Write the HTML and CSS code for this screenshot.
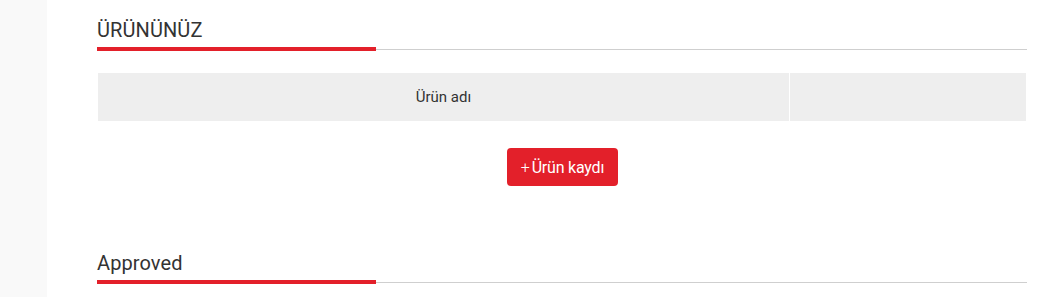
FILE: index.html
```html
<!DOCTYPE html>
<html lang="tr">
<head>
<meta charset="utf-8">
<link rel="stylesheet" href="styles.css">
</head>
<body>
<div class="layout">
  <aside class="sidebar"></aside>
  <main class="content">
    <section class="section">
      <h2 class="section-title">ÜRÜNÜNÜZ</h2>
      <div class="title-rule"><span class="title-accent"></span></div>
      <div class="table">
        <div class="cell cell-main">Ürün adı</div>
        <div class="cell cell-side"></div>
      </div>
      <div class="actions">
        <button class="btn-add"><span class="plus">+</span>Ürün kaydı</button>
      </div>
    </section>
    <section class="section section-approved">
      <h2 class="section-title">Approved</h2>
      <div class="title-rule"><span class="title-accent"></span></div>
    </section>
  </main>
</div>
</body>
</html>
```
FILE: styles.css
```css
html, body {
  margin: 0;
  padding: 0;
  background: #ffffff;
  font-family: Roboto, "Liberation Sans", sans-serif;
  color: #333333;
}
.layout {
  display: flex;
  height: 297px;
  overflow: hidden;
}
.sidebar {
  width: 47px;
  flex: none;
  background: #f9f9f9;
}
.content {
  flex: 1;
  padding: 0 33px 0 50px;
}
.section {
  padding-top: 17px;
}
.section-title {
  margin: 0;
  font-size: 20px;
  font-weight: 400;
  line-height: 27px;
  color: #333333;
  letter-spacing: 0.1px;
}
.title-rule {
  margin-top: 3px;
  height: 4px;
  display: flex;
  align-items: center;
  background: linear-gradient(#cfcfcf, #cfcfcf) 0 50% / 100% 1px no-repeat;
}
.title-accent {
  display: block;
  width: 279px;
  height: 4px;
  background: #e3202a;
}
.table {
  margin: 22px 1px 0 1px;
  display: grid;
  grid-template-columns: 691px 1fr;
  column-gap: 1px;
  height: 48px;
}
.cell {
  background: #eeeeee;
  display: flex;
  align-items: center;
  justify-content: center;
  font-size: 15px;
  color: #333333;
}
.actions {
  display: flex;
  justify-content: center;
  margin-top: 27px;
}
.btn-add {
  border: none;
  background: #e3202a;
  color: #ffffff;
  border-radius: 4px;
  width: 111px;
  height: 38px;
  font-family: Roboto, "Liberation Sans", sans-serif;
  font-size: 16px;
  padding: 0 0 0 1px;
  display: flex;
  align-items: center;
  justify-content: center;
  letter-spacing: -0.2px;
}
.plus {
  font-weight: 300;
  margin-right: 2px;
}
.section-approved {
  padding-top: 64px;
}
```
